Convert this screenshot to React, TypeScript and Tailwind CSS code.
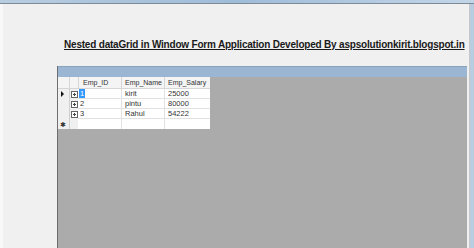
const rows = [
  { id: "1", name: "kirit", salary: "25000" },
  { id: "2", name: "pintu", salary: "80000" },
  { id: "3", name: "Rahul", salary: "54222" },
];

const cols = "grid grid-cols-[12px_8px_44px_43px_44px]";

const Expand = () => (
  <svg width="7" height="7" viewBox="0 0 7 7">
    <rect x="0.5" y="0.5" width="6" height="6" fill="#fff" stroke="#666" />
    <path d="M2 3.5h3M3.5 2v3" stroke="#444" />
  </svg>
);

export default function App() {
  return (
    <div className="w-[474px] h-[248px] bg-[#f0f0f0] flex flex-col overflow-hidden font-['Liberation_Sans',Arial,sans-serif]">
      <div className="h-[3px] bg-gradient-to-r from-[#b8cde0] via-[#9fbcd8] to-[#c3d6e8]" />
      <div className="h-px bg-[#7d8a98]" />
      <div className="flex-1 flex">
        <div className="w-[3px] bg-[#f8f8f8]" />
        <div className="flex-1 flex flex-col">
          <div className="pt-[33px] pl-[61px] h-[62px] leading-[12px]">
            <span className="text-[10px] font-bold text-[#1a1a1a] underline tracking-[-0.2px] whitespace-nowrap">
              Nested dataGrid in Window Form Application Developed By aspsolutionkirit.blogspot.in
            </span>
          </div>
          <div className="ml-[54px] mr-[2px] flex-1 bg-[#ababab] border-l border-[#6e6e6e] flex flex-col">
            <div className="h-[11px] bg-[#9bb6d2] border-t border-[#8aa3bc]" />
            <div className="w-[152px] text-[7px] text-[#333] bg-white">
              <div className={`${cols} h-[12px] bg-[#f4f4f4] border-b border-[#d6d6d6]`}>
                <div className="border-r border-[#d6d6d6]" />
                <div />
                <div className="border-l border-r border-[#d6d6d6] pl-[4px] leading-[11px]">Emp_ID</div>
                <div className="border-r border-[#d6d6d6] pl-[3px] leading-[11px]">Emp_Name</div>
                <div className="pl-[3px] leading-[11px]">Emp_Salary</div>
              </div>
              {rows.map((r, i) => (
                <div key={r.id} className={`${cols} h-[10px] border-b border-[#e2e2e2]`}>
                  <div className="bg-[#f0f0f0] border-r border-[#d0d0d0] flex items-center pl-[3px]">
                    {i === 0 && <div className="w-0 h-0 border-y-[3px] border-y-transparent border-l-[3px] border-l-[#111]" />}
                  </div>
                  <div className="bg-[#f0f0f0] flex items-center justify-center">
                    <Expand />
                  </div>
                  <div className="border-r border-[#e2e2e2] pl-[1px] leading-[10px] text-[7.5px]">
                    {i === 0 ? <span className="bg-[#3399ff] text-white px-[1px]">{r.id}</span> : <span className="pl-[1px]">{r.id}</span>}
                  </div>
                  <div className="border-r border-[#e2e2e2] pl-[3px] leading-[10px] text-[7.5px]">{r.name}</div>
                  <div className="pl-[3px] leading-[10px] text-[7.5px]">{r.salary}</div>
                </div>
              ))}
              <div className={`${cols} h-[10px]`}>
                <div className="bg-[#f0f0f0] border-r border-[#d0d0d0] flex items-center pl-[2px] text-[7px] leading-none">✱</div>
                <div className="bg-[#f0f0f0]" />
                <div className="border-r border-[#e2e2e2]" />
                <div className="border-r border-[#e2e2e2]" />
                <div />
              </div>
            </div>
          </div>
        </div>
        <div className="w-px bg-[#c8c8c8]" />
        <div className="w-[4px] bg-[#b9cde0]" />
      </div>
    </div>
  );
}
